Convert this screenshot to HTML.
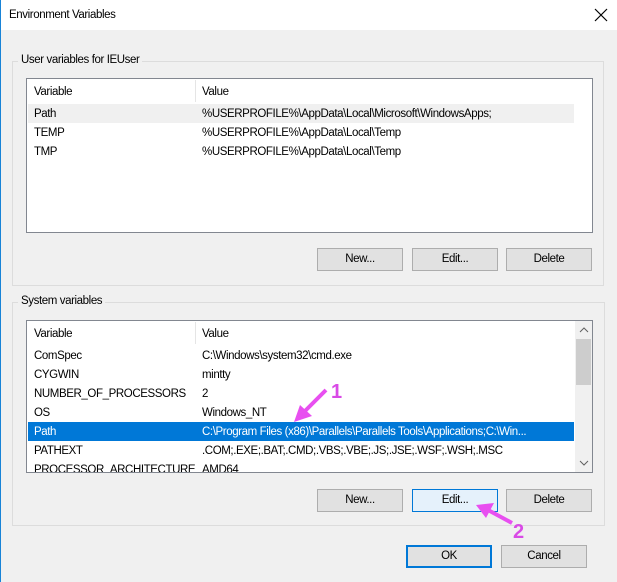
<!DOCTYPE html>
<html><head><style>
*{box-sizing:border-box;margin:0;padding:0}
body{width:617px;height:582px;background:#f0f0f0;font-family:"Liberation Sans",sans-serif;font-size:11.5px;letter-spacing:-0.4px;color:#000;position:relative;overflow:hidden}
.abs{position:absolute}
.title{left:0;top:0;width:617px;height:30px;background:#fff}
.group{border:1px solid #dcdcdc}
.legend{background:#f0f0f0;padding:0 3px}
.list{background:#fff;border:1px solid #828790;overflow:hidden}
.row{position:absolute;left:1px;height:19px;line-height:19px;width:548px}
.row span{position:absolute;left:6px;white-space:nowrap}
.row span+span{left:174px}
.btn{position:absolute;height:23px;background:#e1e1e1;border:1px solid #adadad;text-align:center;line-height:21px}
</style></head><body>
<div class="abs" style="left:0;top:0;width:1px;height:582px;background:#1883d7;z-index:5"></div>
<div class="abs title"></div>
<div class="abs" style="left:9px;top:9px">Environment Variables</div>
<svg class="abs" style="left:594px;top:8px" width="14" height="14"><path d="M1 1L13 13M13 1L1 13" stroke="#000" stroke-width="1.2"/></svg>

<div class="abs group" style="left:12px;top:61px;width:592px;height:225px"></div>
<div class="abs legend" style="left:18px;top:54px">User variables for IEUser</div>
<div class="abs list" style="left:26px;top:78px;width:567px;height:155px">
 <div class="row" style="top:1px;height:23px;line-height:24px;width:524px"><span>Variable</span><span>Value</span></div>
 <div class="abs" style="left:168px;top:1px;width:1px;height:22px;background:#e5e5e5"></div>
 <div class="row" style="top:25px;background:#f0f0f0;width:546px;line-height:21px"><span>Path</span><span>%USERPROFILE%\AppData\Local\Microsoft\WindowsApps;</span></div>
 <div class="row" style="top:44px;line-height:21px"><span>TEMP</span><span>%USERPROFILE%\AppData\Local\Temp</span></div>
 <div class="row" style="top:63px;line-height:21px"><span>TMP</span><span>%USERPROFILE%\AppData\Local\Temp</span></div>
</div>
<div class="btn" style="left:317px;top:248px;width:86px">New...</div>
<div class="btn" style="left:412px;top:248px;width:86px">Edit...</div>
<div class="btn" style="left:506px;top:248px;width:86px">Delete</div>

<div class="abs group" style="left:12px;top:302px;width:593px;height:224px"></div>
<div class="abs legend" style="left:18px;top:295px">System variables</div>
<div class="abs list" style="left:26px;top:320px;width:567px;height:153px">
 <div class="row" style="top:1px;height:23px;line-height:24px;width:524px"><span>Variable</span><span>Value</span></div>
 <div class="abs" style="left:168px;top:1px;width:1px;height:22px;background:#e5e5e5"></div>
 <div class="row" style="top:25px;line-height:21px"><span>ComSpec</span><span>C:\Windows\system32\cmd.exe</span></div>
 <div class="row" style="top:44px;line-height:21px"><span>CYGWIN</span><span>mintty</span></div>
 <div class="row" style="top:63px;line-height:21px"><span>NUMBER_OF_PROCESSORS</span><span>2</span></div>
 <div class="row" style="top:82px;line-height:21px"><span>OS</span><span>Windows_NT</span></div>
 <div class="row" style="top:101px;background:#0078d7;color:#fff;width:546px;line-height:21px"><span>Path</span><span>C:\Program Files (x86)\Parallels\Parallels Tools\Applications;C:\Win...</span></div>
 <div class="row" style="top:120px;line-height:21px"><span>PATHEXT</span><span>.COM;.EXE;.BAT;.CMD;.VBS;.VBE;.JS;.JSE;.WSF;.WSH;.MSC</span></div>
 <div class="row" style="top:139px;line-height:21px"><span>PROCESSOR_ARCHITECTURE</span><span>AMD64</span></div>
 <div class="abs" style="left:548px;top:0;width:17px;height:151px;background:#f0f0f0"></div>
 <div class="abs" style="left:549px;top:18px;width:15px;height:46px;background:#cdcdcd"></div>
 <svg class="abs" style="left:552px;top:6px" width="10" height="6"><path d="M1 5L5 1L9 5" stroke="#606060" fill="none"/></svg>
 <svg class="abs" style="left:552px;top:139px" width="10" height="6"><path d="M1 1L5 5L9 1" stroke="#606060" fill="none"/></svg>
</div>
<div class="btn" style="left:317px;top:489px;width:86px">New...</div>
<div class="btn" style="left:412px;top:489px;width:86px;background:#e5f1fb;border-color:#0078d7">Edit...</div>
<div class="btn" style="left:506px;top:489px;width:86px">Delete</div>

<div class="btn" style="left:406px;top:545px;width:86px;border:2px solid #0078d7;line-height:19px">OK</div>
<div class="btn" style="left:501px;top:545px;width:86px">Cancel</div>

<svg class="abs" style="left:0;top:0" width="617" height="582">
 <path d="M326 390L303 413" stroke="#e84ff0" stroke-width="4"/>
 <path d="M294 422L300 405L312 416Z" fill="#e84ff0"/>
 <text x="331" y="398" font-family="Liberation Sans" font-weight="bold" font-size="20" fill="#d94ae6" style="letter-spacing:0">1</text>
 <path d="M512 523L488 510" stroke="#e84ff0" stroke-width="4"/>
 <path d="M476 505L494 503L486 518Z" fill="#e84ff0"/>
 <text x="513" y="538" font-family="Liberation Sans" font-weight="bold" font-size="20" fill="#d94ae6" style="letter-spacing:0">2</text>
</svg>
</body></html>
